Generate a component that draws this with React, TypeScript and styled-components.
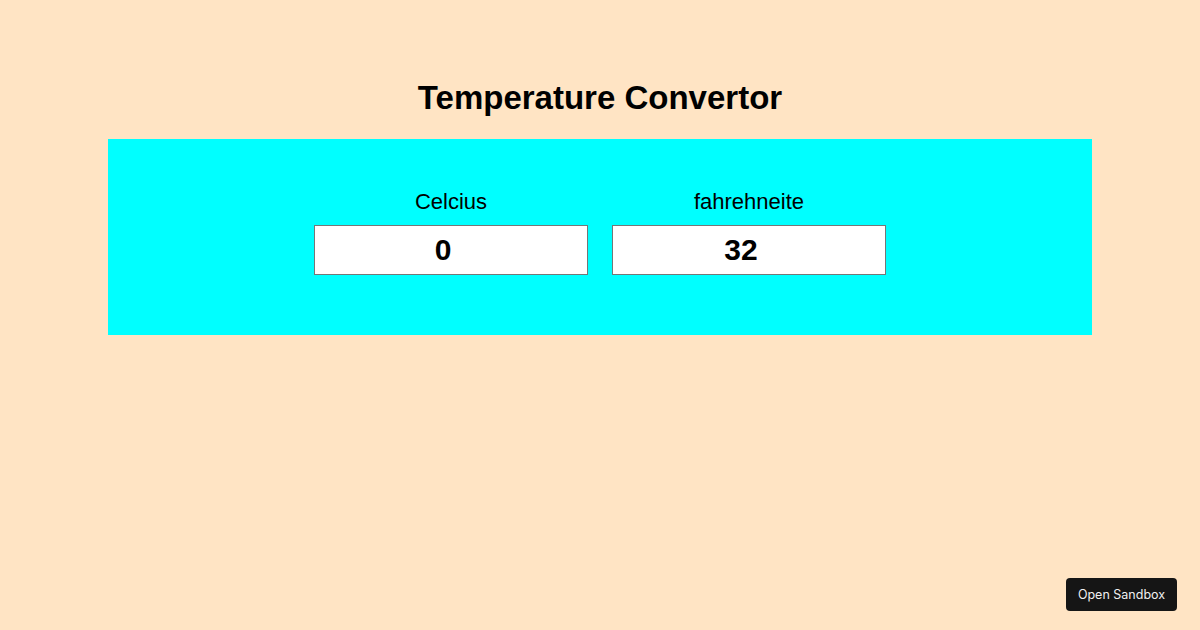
import styled, { createGlobalStyle } from 'styled-components'
import { useState } from 'react'

const GlobalStyle = createGlobalStyle`
  html, body {
    margin: 0;
    padding: 0;
    background-color: #ffe4c4;
    font-family: "Liberation Sans", Arial, sans-serif;
  }
  body {
    height: 630px;
    overflow: hidden;
  }
`

const Page = styled.div`
  width: 1200px;
  height: 630px;
  position: relative;
  display: flex;
  flex-direction: column;
  align-items: center;
`

const Title = styled.h1`
  margin: 79px 0 22px;
  font-size: 33px;
  line-height: 38px;
  font-weight: 700;
  color: #000;
`

const Panel = styled.div`
  width: 984px;
  height: 196px;
  box-sizing: border-box;
  background-color: #00ffff;
  padding-top: 50px;
  display: flex;
  justify-content: center;
  gap: 24px;
`

const Field = styled.label`
  width: 274px;
  display: flex;
  flex-direction: column;
  align-items: center;
  gap: 11px;
`

const FieldLabel = styled.span`
  font-size: 22px;
  line-height: 25px;
  color: #000;
`

const Input = styled.input`
  width: 100%;
  height: 50px;
  box-sizing: border-box;
  border: 1px solid #767676;
  background: #fff;
  text-align: center;
  font-family: "Liberation Sans", Arial, sans-serif;
  font-size: 30px;
  font-weight: 700;
  color: #000;
  outline: none;
  padding: 0 16px 0 0;
`

const SandboxButton = styled.button`
  position: absolute;
  right: 23px;
  bottom: 19px;
  width: 111px;
  height: 33px;
  border: none;
  border-radius: 4px;
  background-color: #151515;
  color: #f0f0f0;
  font-family: Inter, "Liberation Sans", sans-serif;
  font-size: 12.5px;
  cursor: pointer;
`

const App = () => {
  const [celsius, setCelsius] = useState('0')
  const fahrenheit = celsius === '' ? '' : String((Number(celsius) * 9) / 5 + 32)

  return (
    <Page>
      <GlobalStyle />
      <Title>Temperature Convertor</Title>
      <Panel>
        <Field>
          <FieldLabel>Celcius</FieldLabel>
          <Input value={celsius} onChange={(e) => setCelsius(e.target.value)} />
        </Field>
        <Field>
          <FieldLabel>fahrehneite</FieldLabel>
          <Input
            value={fahrenheit}
            onChange={(e) => {
              const v = e.target.value
              setCelsius(v === '' ? '' : String(((Number(v) - 32) * 5) / 9))
            }}
          />
        </Field>
      </Panel>
      <SandboxButton>Open Sandbox</SandboxButton>
    </Page>
  )
}

export default App
